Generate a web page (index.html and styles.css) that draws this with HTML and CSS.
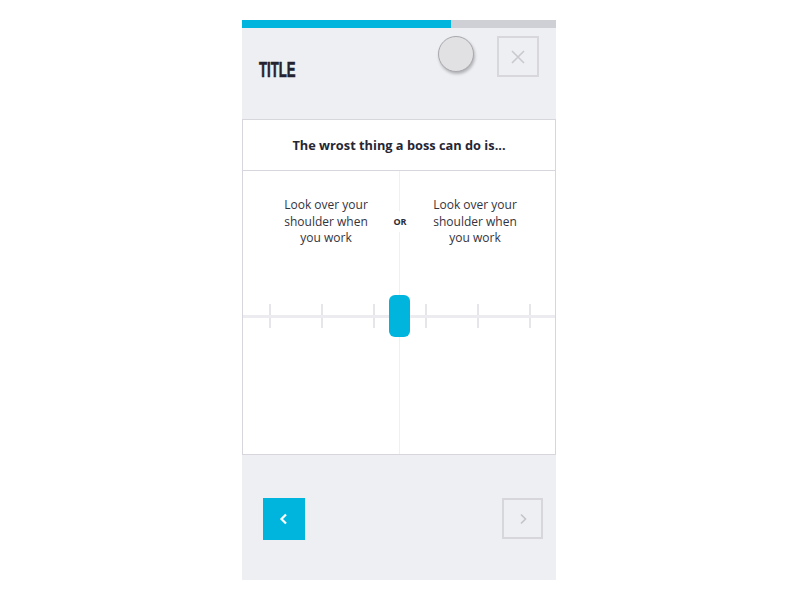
FILE: index.html
```html
<!DOCTYPE html>
<html lang="en">
<head>
<meta charset="utf-8">
<title>Title</title>
<link rel="stylesheet" href="styles.css">
</head>
<body>
<div class="app">
  <div class="progress"><div class="progress-fill" style="width:209px"></div></div>
  <header class="header">
    <h1 class="title">TITLE</h1>
    <div class="header-actions">
      <div class="toggle"></div>
      <button class="close" aria-label="Close">
        <svg width="14" height="14" viewBox="0 0 14 14"><path d="M1 1L13 13M13 1L1 13" stroke="#c9c9cf" stroke-width="1.6" fill="none"/></svg>
      </button>
    </div>
  </header>
  <section class="card">
    <div class="question">The wrost thing a boss can do is...</div>
    <div class="choices">
      <div class="options">
        <p class="option">Look over your shoulder when you work</p>
        <span class="or">OR</span>
        <p class="option">Look over your shoulder when you work</p>
      </div>
      <div class="slider">
        <div class="track"></div>
        <div class="ticks">
          <span class="tick"></span><span class="tick"></span><span class="tick"></span>
          <span class="tick"></span><span class="tick"></span><span class="tick"></span>
        </div>
        <div class="thumb"></div>
      </div>
    </div>
  </section>
  <footer class="footer">
    <button class="nav prev" aria-label="Previous">
      <svg width="10" height="12" viewBox="0 0 10 12"><path d="M7 1.5L2.5 6L7 10.5" stroke="#fff" stroke-width="2.2" fill="none"/></svg>
    </button>
    <button class="nav next" aria-label="Next">
      <svg width="10" height="12" viewBox="0 0 10 12"><path d="M3 1.5L7.5 6L3 10.5" stroke="#c4c4ca" stroke-width="1.6" fill="none"/></svg>
    </button>
  </footer>
</div>
</body>
</html>
```
FILE: styles.css
```css
* { box-sizing: border-box; }

html, body {
  margin: 0;
  background: #ffffff;
}

body {
  font-family: "Open Sans", "Liberation Sans", sans-serif;
  color: #2b2b38;
}

.app {
  width: 314px;
  margin: 20px 0 0 242px;
  background: #eeeff2;
}

.progress {
  height: 8px;
  background: #cfcfd6;
}

.progress-fill {
  height: 100%;
  background: #00b5dd;
}

.header {
  height: 91px;
  display: flex;
  justify-content: space-between;
  align-items: flex-start;
  padding: 8px 17px 0 17px;
}

/* condensed display face, narrowed from Liberation Sans Bold */
.title {
  margin: 21px 0 0 0;
  font-family: "Liberation Sans", sans-serif;
  font-weight: 700;
  font-size: 22px;
  line-height: 26px;
  color: #23232f;
  -webkit-text-stroke: 0.6px #23232f;
  transform: scaleX(0.6);
  transform-origin: left center;
}

.header-actions {
  display: flex;
  align-items: flex-start;
  gap: 23px;
}

.toggle {
  width: 36px;
  height: 36px;
  border-radius: 50%;
  background: #e1e1e4;
  border: 1px solid #a9a9ae;
  box-shadow: 1px 2px 3px rgba(0, 0, 0, 0.25);
}

.close {
  width: 42px;
  height: 41px;
  padding: 0;
  background: transparent;
  border: 2px solid #d7d7dc;
  display: flex;
  align-items: center;
  justify-content: center;
}

.card {
  background: #ffffff;
  border: 1px solid #d6d6dc;
  height: 336px;
  display: flex;
  flex-direction: column;
}

.question {
  height: 51px;
  flex-shrink: 0;
  display: flex;
  align-items: center;
  justify-content: center;
  border-bottom: 1px solid #d6d6dc;
  font-weight: 700;
  font-size: 12.8px;
  color: #262634;
}

.choices {
  flex: 1;
  position: relative;
  background: linear-gradient(#f0f0f2, #f0f0f2) no-repeat 156px 0 / 1px 100%;
}

.options {
  display: flex;
  align-items: center;
  padding: 26px 0 0 35px;
}

.option {
  margin: 0;
  width: 96px;
  text-align: center;
  font-size: 12px;
  line-height: 16.5px;
  color: #33333d;
}

.or {
  width: 14px;
  margin: 0 20px 0 19px;
  text-align: center;
  background: #ffffff;
  padding: 4px 0;
  font-size: 9px;
  font-weight: 700;
  color: #2b2b38;
}

.slider {
  position: relative;
  height: 42px;
  margin-top: 48px;
}

.track {
  position: absolute;
  left: 0;
  right: 0;
  top: 20px;
  height: 3px;
  background: #ececf0;
}

.ticks {
  display: flex;
  gap: 50px;
  padding: 9px 0 0 26px;
}

.tick {
  width: 2px;
  height: 24px;
  background: #e6e6ea;
}

.thumb {
  position: absolute;
  left: 146px;
  top: 0;
  width: 21px;
  height: 42px;
  border-radius: 6px;
  background: #00b5dd;
}

.footer {
  height: 125px;
  display: flex;
  justify-content: space-between;
  align-items: center;
  padding: 2px 13px 0 21px;
}

.nav {
  width: 42px;
  height: 42px;
  padding: 0;
  display: flex;
  align-items: center;
  justify-content: center;
}

.prev {
  background: #00b5dd;
  border: none;
}

.next {
  background: transparent;
  border: 2px solid #d6d6db;
  width: 41px;
  height: 41px;
}
```
